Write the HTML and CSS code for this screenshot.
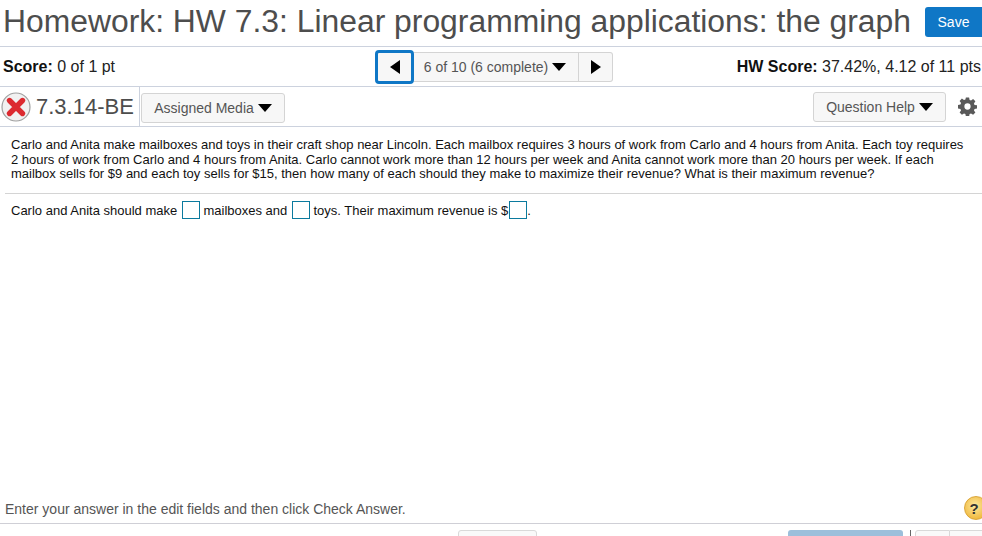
FILE: index.html
```html
<!DOCTYPE html>
<html lang="en">
<head>
<meta charset="utf-8">
<title>Homework</title>
<link rel="stylesheet" href="styles.css">
</head>
<body>
<div class="page">
  <header class="title-row">
    <h1 class="title">Homework: HW 7.3: Linear programming applications: the graph</h1>
    <button class="save">Save</button>
  </header>
  <div class="score-row">
    <div class="score"><b>Score:</b> 0 of 1 pt</div>
    <div class="pager">
      <button class="pg pg-prev"><span class="tri-left"></span></button>
      <button class="pg pg-mid">6 of 10 (6 complete)<span class="tri-down"></span></button>
      <button class="pg pg-next"><span class="tri-right"></span></button>
    </div>
    <div class="hw-score"><b>HW Score:</b> 37.42%, 4.12 of 11 pts</div>
  </div>
  <div class="q-row">
    <svg class="x-icon" width="30" height="30" viewBox="0 0 30 30">
      <circle cx="15" cy="15" r="14" fill="#f1f1f1" stroke="#a0a0a0" stroke-width="1.2"/>
      <path d="M8.500 8.500L21.500 21.500M21.500 8.500L8.500 21.500" stroke="#dc2a30" stroke-width="5.400" stroke-linecap="round"/>
    </svg>
    <span class="q-num">7.3.14-BE</span>
    <button class="btn media">Assigned Media<span class="tri-down"></span></button>
    <button class="btn help">Question Help<span class="tri-down"></span></button>
    <svg class="gear" width="19" height="19" viewBox="0 0 20 20">
      <path fill="#595959" fill-rule="evenodd" d="M8.300 0.500h3.400l.5 2.600 1.500.6 2.200-1.500 2.400 2.400-1.500 2.200.6 1.500 2.600.5v3.400l-2.600.5-.6 1.500 1.500 2.200-2.400 2.400-2.200-1.500-1.500.6-.5 2.600H8.300l-.5-2.600-1.500-.6-2.200 1.500-2.400-2.400 1.500-2.200-.6-1.500-2.600-.5V8.300l2.600-.5.6-1.500-1.500-2.200 2.400-2.400 2.200 1.500 1.500-.6zM10 6.700a3.300 3.300 0 1 0 0 6.600a3.300 3.300 0 1 0 0-6.600z"/>
    </svg>
  </div>
  <main class="content">
    <p class="problem">Carlo and Anita make mailboxes and toys in their craft shop near Lincoln. Each mailbox requires 3 hours of work from Carlo and 4 hours from Anita. Each toy requires 2 hours of work from Carlo and 4 hours from Anita. Carlo cannot work more than 12 hours per week and Anita cannot work more than 20 hours per week. If each mailbox sells for $9 and each toy sells for $15, then how many of each should they make to maximize their revenue? What is their maximum revenue?</p>
    <div class="answer">Carlo and Anita should make <span class="field"></span> mailboxes and <span class="field"></span> toys. Their maximum revenue is $<span class="field"></span>.</div>
  </main>
  <div class="hint-row">
    <span>Enter your answer in the edit fields and then click Check Answer.</span>
    <span class="help-dot">?</span>
  </div>
  <footer class="foot">
    <span class="foot-btn clear"></span>
    <span class="foot-check"></span>
    <span class="foot-sep"></span>
    <span class="foot-btn small"></span>
    <span class="foot-btn last"></span>
  </footer>
</div>
</body>
</html>
```
FILE: styles.css
```css
* { box-sizing: border-box; }
html, body { margin: 0; padding: 0; background: #fff; }
.page {
  width: 982px; height: 536px; overflow: hidden;
  display: flex; flex-direction: column;
  font-family: "Liberation Sans", Arial, sans-serif; color: #111;
}
button { font-family: inherit; cursor: pointer; }
.title-row {
  height: 47px; flex: none; display: flex; align-items: flex-start;
  justify-content: space-between; border-bottom: 1px solid #ccd2de;
  padding: 0 0 0 3px;
}
.title { margin: 0; font-weight: 400; font-size: 31.850px; line-height: 42px; color: #4d4d4d; white-space: nowrap; }
.save {
  width: 57px; height: 30px; margin-top: 7px; background: #0f77c6; color: #fff;
  border: 0; border-radius: 3px 0 0 3px; font-size: 14px; padding: 0;
}
.score-row {
  height: 40px; flex: none; display: grid; grid-template-columns: 372px 240px 1fr;
  align-items: center; border-bottom: 1px solid #ccd2de; padding: 0 1px 0 3px;
  font-size: 16px; color: #222;
}
.score-row b { color: #111; }
.hw-score { text-align: right; white-space: nowrap; }
.pager { display: flex; align-items: center; height: 34px; margin-top: 1px; }
.pg {
  height: 30px; background: #f7f7f7; border: 1px solid #d4d4d4; padding: 0;
  display: flex; align-items: center; justify-content: center; color: #555; font-size: 14px; white-space: nowrap;
}
.pg-prev { width: 39px; height: 34px; border: 3px solid #0f77c6; border-radius: 4px; }
.pg-mid { width: 165px; border-left: 0; padding-right: 2px; }
.pg-next { width: 34px; border-left: 0; border-radius: 0 3px 3px 0; }
.tri-left { border: 7px solid transparent; border-left: 0; border-right: 10px solid #000; }
.tri-right { border: 7px solid transparent; border-right: 0; border-left: 10px solid #000; }
.tri-down { display: inline-block; border: 7px solid transparent; border-bottom: 0; border-top: 8px solid #000; margin-left: 4px; }
.q-row {
  height: 40px; flex: none; display: flex; align-items: center;
  border-bottom: 1px solid #ccd2de; padding-left: 1px;
}
.x-icon { flex: none; margin-top: 1px; }
.q-num { font-size: 22px; color: #4d4d4d; margin-left: 5px; width: 104px; border-right: 1px solid #ccd2de; height: 39px; line-height: 39px; white-space: nowrap; }
.btn {
  height: 30px; background: #f7f7f7; border: 1px solid #d4d4d4; border-radius: 3px;
  color: #555; font-size: 14px; padding: 0; display: flex; align-items: center; justify-content: center;
}
.media { width: 144px; margin-left: 1px; margin-top: 2px; }
.help { width: 133px; margin-left: auto; }
.gear { flex: none; margin: 0 5px 0 12px; }
.content { flex: 1; padding: 0 0 0 5px; font-size: 13px; color: #111; }
.problem { margin: 11px 0 0; padding: 0 8px 0 6px; line-height: 14.600px; height: 56px; border-bottom: 1px solid #d4d4d4; }
.answer { padding: 6px 6px 0; height: 26px; display: flex; align-items: center; white-space: pre; }
.field { display: inline-block; width: 18px; height: 18px; border: 1px solid #0b7a9e; margin: 0 0 0 1px; flex: none; }
.hint-row {
  height: 31px; flex: none; display: flex; align-items: center; justify-content: space-between;
  padding: 1px 0 0 5px; border-bottom: 1px solid #cfcfd6; color: #555; font-size: 14px;
}
.help-dot {
  width: 24px; height: 24px; border-radius: 50%; margin-right: -6px; margin-top: -1px; flex: none;
  background: radial-gradient(circle at 45% 40%, #fde9a0, #f0b93e 75%, #d99a26);
  border: 1px solid #dba63a; color: #333; font-weight: 700; font-size: 15px;
  display: flex; align-items: center; justify-content: center; padding-right: 4px;
}
.foot { height: 12px; flex: none; display: flex; align-items: flex-start; padding-top: 6px; }
.foot-btn { display: block; height: 20px; background: #f9f9f9; border: 1px solid #d9d9d9; border-radius: 3px; flex: none; }
.clear { width: 79px; margin-left: 458px; }
.foot-check { display: block; width: 115px; height: 20px; margin-left: 251px; background: #9cbfdb; border-radius: 3px; flex: none; }
.foot-sep { display: block; width: 1px; height: 20px; background: #666; margin-left: 7px; flex: none; }
.small { width: 35px; margin-left: 4px; border-radius: 3px 0 0 3px; }
.last { width: 40px; border-left: 0; border-radius: 0; }
```
